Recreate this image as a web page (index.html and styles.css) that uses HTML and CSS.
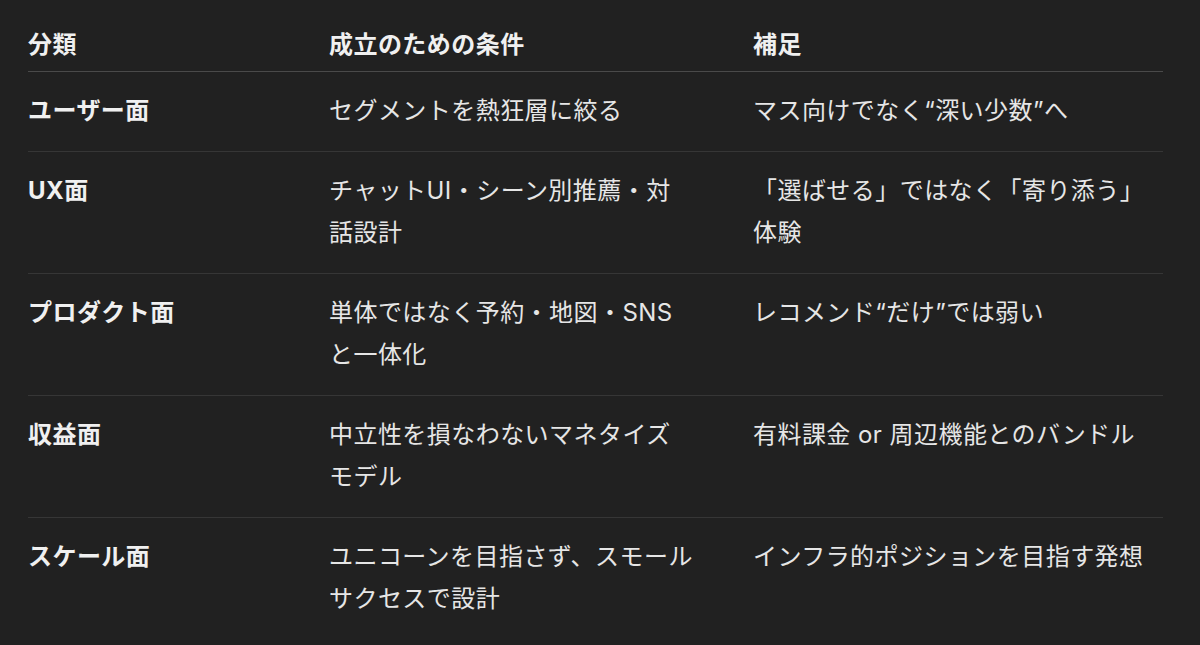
FILE: index.html
```html
<!DOCTYPE html>
<html lang="ja">
<head>
<meta charset="utf-8">
<title>成立のための条件</title>
<link rel="stylesheet" href="styles.css">
</head>
<body>
<table class="cond-table">
  <colgroup>
    <col class="col-cat">
    <col class="col-cond">
    <col class="col-note">
  </colgroup>
  <thead>
    <tr>
      <th>分類</th>
      <th>成立のための条件</th>
      <th>補足</th>
    </tr>
  </thead>
  <tbody>
    <tr>
      <td class="cat">ユーザー面</td>
      <td>セグメントを熱狂層に絞る</td>
      <td>マス向けでなく“深い少数”へ</td>
    </tr>
    <tr>
      <td class="cat">UX面</td>
      <td>チャットUI・シーン別推薦・対<span class="phrase">話設計</span></td>
      <td>「選ばせる」ではなく「寄り添う」<span class="phrase">体験</span></td>
    </tr>
    <tr>
      <td class="cat">プロダクト面</td>
      <td>単体ではなく予約・地図・SNS<span class="phrase">と一体化</span></td>
      <td>レコメンド“だけ”では弱い</td>
    </tr>
    <tr>
      <td class="cat">収益面</td>
      <td>中立性を損なわないマネタイズ<span class="phrase">モデル</span></td>
      <td>有料課金 or 周辺機能とのバンドル</td>
    </tr>
    <tr>
      <td class="cat">スケール面</td>
      <td>ユニコーンを目指さず、スモール<span class="phrase">サクセスで設計</span></td>
      <td>インフラ的ポジションを目指す発想</td>
    </tr>
  </tbody>
</table>
</body>
</html>
```

FILE: styles.css
```css
html, body {
  margin: 0;
  padding: 0;
  background: #212121;
}

body {
  font-family: Inter, "Noto Sans CJK JP", sans-serif;
  font-size: 24px;
  letter-spacing: 0.45px;
  color: #e6e6e6;
}

.cond-table {
  margin-left: 28px;
  width: 1135px;
  border-collapse: collapse;
  table-layout: fixed;
}

.col-cat { width: 301px; }
.col-cond { width: 424px; }
.col-note { width: 410px; }

.cond-table th {
  text-align: left;
  font-weight: 700;
  color: #f0f0f0;
  line-height: 42px;
  padding: 24px 0 5px 0;
  border-bottom: 1px solid #4a4a4a;
}

.cond-table td {
  vertical-align: top;
  line-height: 42px;
  padding: 18px 0 19px 0;
  border-bottom: 1px solid #363636;
}

.cond-table td:nth-child(2) {
  padding-right: 52px;
}

.cond-table td:nth-child(3),
.cond-table th:nth-child(3) {
  padding-right: 12px;
}

.cond-table tbody tr:last-child td {
  border-bottom: none;
}

.cond-table td.cat {
  font-weight: 700;
  color: #f0f0f0;
}

.phrase {
  white-space: nowrap;
}
```
